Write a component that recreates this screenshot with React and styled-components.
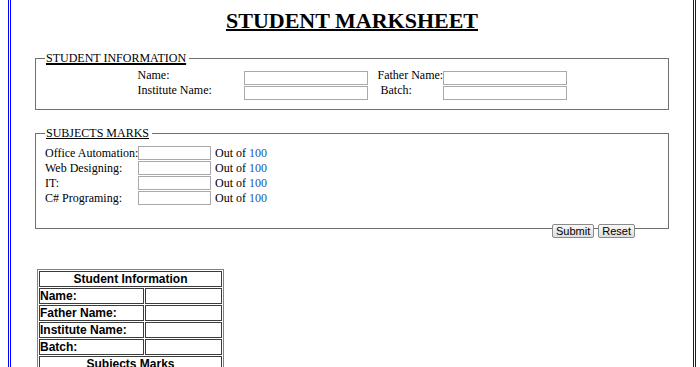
import React from "react";
import styled, { createGlobalStyle } from "styled-components";

const Global = createGlobalStyle`
  html { overflow: hidden; }
  body {
    margin: 0 0 0 8px;
    font-family: "Liberation Serif", "Times New Roman", serif;
    font-size: 12px;
    color: #000;
    background: #fff;
  }
`;

const Page = styled.div`
  box-sizing: border-box;
  width: 688px;
  min-height: 100vh;
  padding-top: 8px;
  border-left: 3px double #0000ff;
  border-right: 3px double #0000ff;
`;

const Title = styled.h1`
  margin: 0;
  text-align: center;
  font-size: 22px;
  font-weight: bold;
  text-decoration: underline;
  text-decoration-thickness: 2px;
  line-height: 25px;
`;

const Fieldset = styled.fieldset`
  margin: ${(p) => p.$top}px 24px 0;
  padding: 6px 9px ${(p) => p.$bottom}px;
  border: 1px solid #707070;
  min-width: 0;
`;

const Legend = styled.legend`
  padding: 0 3px 0 1px;
  font-size: 12px;
  line-height: 14px;
  text-decoration: underline;
  text-decoration-thickness: ${(p) => (p.$thick ? "2px" : "1px")};
  text-decoration-color: ${(p) => (p.$thick ? "#000" : "currentColor")};
`;

const InfoGrid = styled.div`
  display: grid;
  grid-template-columns: 106px 124px 75px 124px;
  row-gap: 1px;
  justify-content: center;
`;

const InfoLabel = styled.span`
  align-self: start;
  line-height: 9px;
  padding-left: ${(p) => p.$indent || 0}px;
  white-space: nowrap;
`;

const TextBox = styled.input`
  box-sizing: border-box;
  width: ${(p) => p.$w}px;
  height: 14px;
  margin: 0;
  padding: 0 2px;
  border: 1px solid #a9a9a9;
  background: #fff;
  font: 12px "Liberation Serif", serif;
  outline: none;
`;

const MarksGrid = styled.div`
  display: grid;
  grid-template-columns: 93px 73px auto;
  row-gap: 1px;
  justify-content: start;
`;

const MarkLabel = styled.span`
  line-height: 14px;
  white-space: nowrap;
`;

const OutOf = styled.span`
  line-height: 14px;
  padding-left: 4px;
  white-space: nowrap;
`;

const Num = styled.span`
  color: #1c56a8;
`;

const ButtonRow = styled.div`
  display: flex;
  justify-content: flex-end;
  gap: 4px;
  margin: -5px 58px 0 0;
  position: relative;
`;

const Button = styled.button`
  box-sizing: border-box;
  height: 14px;
  margin: 0;
  padding: 0 3px;
  font: 11px "Liberation Sans", Arial, sans-serif;
  line-height: 12px;
  color: #000;
  border: 1px solid #8a8a8a;
  border-radius: 2px;
  background: linear-gradient(#f8f8f8, #dddddd);
`;

const Table = styled.table`
  margin: 31px 0 0 26px;
  width: 187px;
  table-layout: fixed;
  border: 1px solid #808080;
  border-spacing: 1px;
  font: bold 12px "Liberation Sans", Arial, sans-serif;
`;

const Cell = styled.td`
  border: 1px solid #3c3c3c;
  padding: 0;
  height: 14px;
  line-height: 14px;
  text-align: ${(p) => (p.$center ? "center" : "left")};
  overflow: hidden;
  white-space: nowrap;
`;

const infoRows = ["Name:", "Father Name:", "Institute Name:", "Batch:"];
const subjects = ["Office Automation:", "Web Designing:", "IT:", "C# Programing:"];

export default function App() {
  return (
    <>
      <Global />
      <Page>
        <Title>STUDENT MARKSHEET</Title>

        <Fieldset $top={18} $bottom={9}>
          <Legend $thick>STUDENT INFORMATION</Legend>
          <InfoGrid>
            <InfoLabel>Name:</InfoLabel>
            <TextBox $w={124} />
            <InfoLabel $indent={10}>Father Name:</InfoLabel>
            <TextBox $w={124} />
            <InfoLabel>Institute Name:</InfoLabel>
            <TextBox $w={124} />
            <InfoLabel $indent={13}>Batch:</InfoLabel>
            <TextBox $w={124} />
          </InfoGrid>
        </Fieldset>

        <Fieldset $top={16} $bottom={23}>
          <Legend>SUBJECTS MARKS</Legend>
          <MarksGrid>
            {subjects.map((s) => (
              <React.Fragment key={s}>
                <MarkLabel>{s}</MarkLabel>
                <TextBox $w={73} />
                <OutOf>
                  Out of <Num>100</Num>
                </OutOf>
              </React.Fragment>
            ))}
          </MarksGrid>
        </Fieldset>

        <ButtonRow>
          <Button type="button">Submit</Button>
          <Button type="button">Reset</Button>
        </ButtonRow>

        <Table>
          <colgroup>
            <col style={{ width: 105 }} />
            <col />
          </colgroup>
          <tbody>
            <tr>
              <Cell colSpan={2} $center>Student Information</Cell>
            </tr>
            {infoRows.map((r) => (
              <tr key={r}>
                <Cell>{r}</Cell>
                <Cell></Cell>
              </tr>
            ))}
            <tr>
              <Cell colSpan={2} $center>Subjects Marks</Cell>
            </tr>
            {subjects.map((r) => (
              <tr key={r}>
                <Cell>{r}</Cell>
                <Cell></Cell>
              </tr>
            ))}
          </tbody>
        </Table>
      </Page>
    </>
  );
}
